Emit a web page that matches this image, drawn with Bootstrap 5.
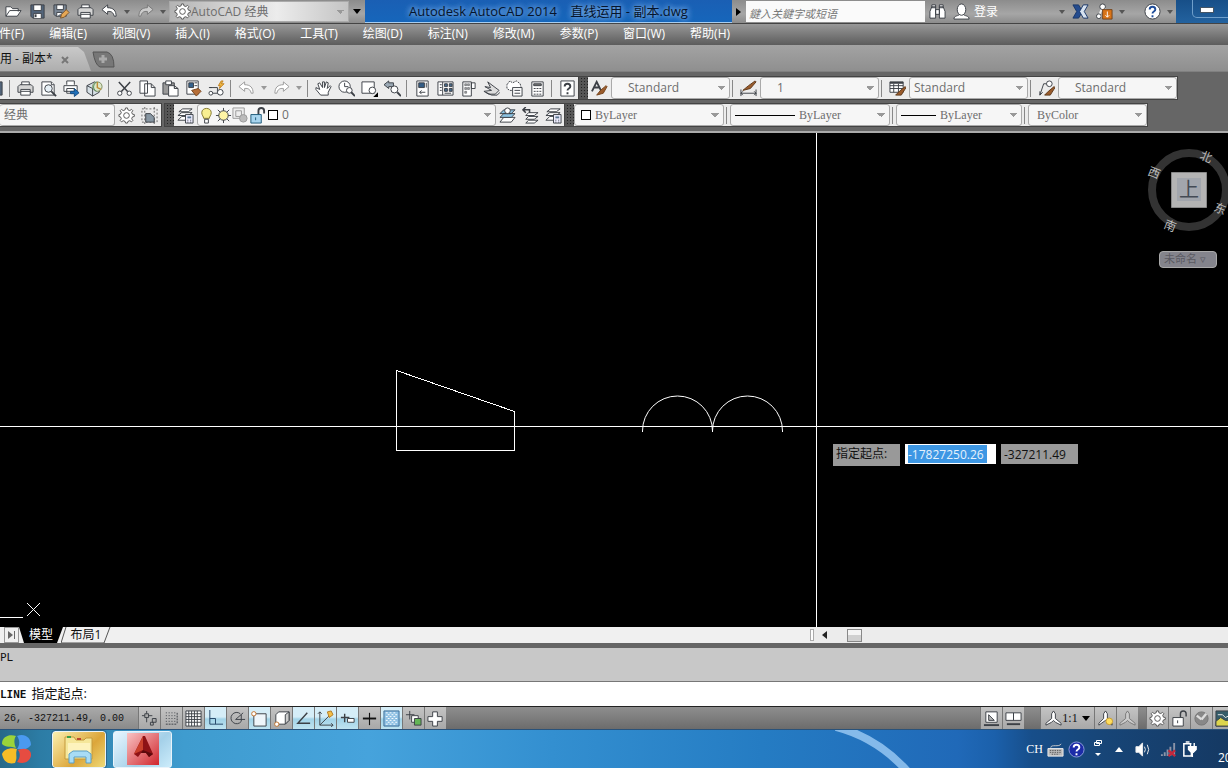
<!DOCTYPE html>
<html lang="zh-CN">
<head>
<meta charset="utf-8">
<meta name="viewport" content="width=device-width, initial-scale=1">
<title>Autodesk AutoCAD 2014</title>
<link rel="stylesheet" href="https://cdn.jsdelivr.net/npm/bootstrap@5.3.0/dist/css/bootstrap.min.css">
<style>
:root{--ui:"Open Sans","Noto Sans CJK SC",sans-serif;--song:"Liberation Serif","Noto Sans CJK SC",serif}
body{font:12px/16px var(--ui);background:#666;color:#111}
button,select,input{font:inherit;color:inherit;border:0;padding:0;background:none;border-radius:0}
button,.ic{flex:none}
.ic{width:17px;height:17px;fill:#fff;stroke:#3c4046;stroke-width:1;display:block}
.ic.muted-line{stroke:#999}
.ic.muted{fill:#ccc;stroke:#777}
.app-title{height:24px;background:linear-gradient(#8c8c8c,#a6a6a6 60%,#8c8c8c);border-bottom:1px solid #444;padding-left:1px}
.qb{width:24px;height:23px;display:flex;align-items:center;justify-content:center}
.qb.fold{width:14px}
.dd{width:12px;height:22px;display:flex;align-items:center;justify-content:center}
.dd::before{content:"";border:3px solid transparent;border-top:4px solid #555;border-bottom:0}
.dd.more{width:16px}
.dd.more::before{border-width:4px;border-top:5px solid #000;border-bottom:0}
.dim::before{border-top-color:#999}
.combo{display:flex;align-items:center;height:22px;min-width:0;background:#f6f6f6;border:1px solid #aaa;border-radius:3px;color:#6d6d6d}
.combo select{appearance:none;flex:1;min-width:0;height:18px;line-height:18px;padding:0 14px 0 4px;outline:0;background:linear-gradient(45deg,transparent 50%,#999 50%) no-repeat right 7px center/4px 4px,linear-gradient(-45deg,transparent 50%,#999 50%) no-repeat right 3px center/4px 4px}
.combo select{background:conic-gradient(from -45deg at 50% 100%,#999 90deg,transparent 0) no-repeat right 4px center/8px 4px}
.combo .sw{width:10px;height:10px;border:1px solid #000;background:#fff;flex:none;margin-left:2px}
.combo hr{margin:0;border-top:1px solid #000;opacity:1;flex:none}
.l-type{width:60px}.l-weight{width:35px}
.song{font-family:var(--song)}
.combo.w-space{width:180px;height:21px;border-radius:0;background:linear-gradient(90deg,#b4b4b4,#ececec 60%,#c4c4c4)}
.caption{background:linear-gradient(#1a5fb4,#1666bb);border-bottom:1px solid #a9cdef;font-size:13px;color:#05142c;text-shadow:0 0 6px #8fbcf0,0 0 6px #8fbcf0;white-space:pre}
.find{width:179px;height:21px;background:#fafafa;font-style:italic;font-size:11px;color:#666;padding:3px 3px 0}
.find::placeholder{color:#777}
.info{width:251px;flex:none}
.winbtns{width:52px;background:linear-gradient(#174f88,#23629f);padding-left:16px;flex:none}
.winbtns button{width:50px;height:18px;border:1px solid #6f9fcb;border-top:0;border-radius:0 0 5px 5px;display:flex}
.winbtns i{width:12px;height:4px;background:#fff;outline:1px solid #456;margin:8px}
.app-menu{height:21px;background:linear-gradient(#989898,#5c5c5c);gap:25px;margin:0;padding:2px 0 0;overflow:hidden;white-space:nowrap}
.app-menu a{color:#fff;text-decoration:none;flex:none}
.app-menu a:first-child{margin-left:-13px}
.docs{height:27px;background:linear-gradient(#a3a3a3,#8f8f8f);border-bottom:1px solid #808080}
.doc{height:24px;width:92px;background:linear-gradient(#c9c9c9,#aeaeae);clip-path:polygon(0 0,78px 0,84px 5px,91px 24px,0 24px);margin-top:2px}
.rowbar{height:22px;margin-top:5px}
.strip{display:flex;align-items:center;height:22px;background:#ececec;outline:1px solid #444;flex:none}
.strip.lead-cut{margin-left:-16px}
.tb{width:23px;height:22px;display:flex;align-items:center;justify-content:center}
.sp{width:4px;height:17px;border-left:1px solid #888;margin-left:2px;flex:none}
.roomy .sp{width:5px}
.grip{width:9px;height:22px;flex:none;background:radial-gradient(#222 1px,transparent 1px) 1px 0/3px 3px,#555}
.w-cut{width:115px}.w-std{width:119px}.w-lay{width:299px}.w-col{width:150px}.w-lt{width:160px}.w-lw{width:126px}
.model{background:#000;min-height:300px;border-top:2px solid #aaa;margin-top:5px;position:relative;overflow:hidden}
.model>svg{position:absolute}
.drawing{inset:0;width:100%;height:100%;fill:none;stroke:#fff;stroke-width:1;shape-rendering:crispEdges}
.drawing .arc{shape-rendering:auto}
.cube{right:0;top:10px;width:84px;height:96px}
.ucs{left:0;bottom:0;width:50px;height:40px;stroke:#fff;shape-rendering:crispEdges}
.ucsname{position:absolute;right:11px;top:118px;width:58px;height:17px;border-radius:4px;border:1px solid #aaa;background:#84848c;color:#5a5a62;font:11px/13px var(--song);text-align:left;padding:0 4px}
.dyn{position:absolute;left:833px;top:311px;gap:5px;height:22px}
.dyn label,.dyn .ybox{background:#999;height:22px;padding:2px 3px;width:67px}
.dyn .xbox{background:#fff;width:91px;height:20px;padding:1px 3px}
.dyn .xbox input{background:#3d97e4;color:#e6f2fc;width:79px;height:18px;display:block}
.dyn .ybox{width:77px;height:20px}
.tabsbar{height:16px;background:#f0f0f0}
.tabsbar button{height:16px;line-height:16px}
.last{width:15px;border:1px solid #999;margin-left:4px}
.tabsbar .last{border:1px solid #999}
.tmodel{width:44px;background:#000;color:#fff;clip-path:polygon(0 0,100% 0,38px 100%,5px 100%)}
.tlay{width:50px;margin-left:-2px;position:relative}
.tlay svg{position:absolute;inset:0;width:50px;height:16px;stroke:#555;fill:none}
.hscroll{width:34%;background:#ececec}
.split{width:4px;height:12px;border:1px solid #aaa;background:#fff}
.thumb{width:15px;height:13px;border:1px solid #888;background:linear-gradient(#f4f4f4 50%,#d0d0d0 50%);margin-left:20px}
.hist{height:39px;background:#c8c8c8;border-top:5px solid #666;border-bottom:1px solid #777;font:11px/20px "DejaVu Sans Mono","Noto Sans CJK SC",monospace}
.cmd{height:24px;background:#fff;font-size:13px}
.cmd b{font:bold 11px/16px "DejaVu Sans Mono",monospace;margin-right:5px}
.cmd input{flex:1;outline:0}
.status{height:23px;border-top:1px solid #222;background:linear-gradient(#8e8e8e,#6c6c6c)}
.coords{width:138px;background:linear-gradient(#aaa,#8a8a8a);font:10px/24px "Liberation Mono",monospace;padding-left:4px;white-space:pre;flex:none}
.sb{height:22px;width:22px;background:linear-gradient(#c4c4c4,#a8a8a8);border-left:1px solid #777;display:flex;align-items:center;justify-content:center}
.sb.on{background:linear-gradient(#d5edf7 45%,#a2d3e8 55%,#bfe3f0)}
.sb.tail{margin-right:-6px}
.scale{width:54px;font:12px/20px var(--song)}
.task{height:39px;border-top:1px solid #29527a;background:linear-gradient(90deg,#276989 0,#2c7ca5 40px,#3f9ccf 15%,#46a3dc 30%,#338fd0 45%,#257cc3 62%,#2069b8 78%,#1b60ab 81%,#174e8a 84%,#174577 90%,#153963);overflow:hidden;position:relative}
.task .swoosh{position:absolute;left:64%;top:0;width:150px;height:39px}
.app{height:37px;border-radius:3px;display:flex;align-items:center;justify-content:center}
.task .app{border:1px solid #e9f3fa}
.files{width:54px;background:linear-gradient(135deg,#fbf0b0,#dca63a 60%,#eeda78);outline:1px solid #2b668d;margin-left:18px}
.acad{width:59px;background:linear-gradient(135deg,#e8f6ff,#a4d0e8 60%,#ccecfb);margin-left:7px}
.tray{color:#fff;position:relative}
.clock{width:10px;margin-top:18px;font-family:var(--ui)}
</style>
</head>
<body class="min-vh-100 d-flex flex-column overflow-hidden">
<svg width="0" height="0" class="position-absolute" aria-hidden="true">
<defs>
<symbol id="open" viewBox="0 0 18 18"><path d="M1 14V4h5l2 2h6v3M1 14l4-6h12l-4 6z"/></symbol>
<symbol id="save" viewBox="0 0 18 18"><path fill="#53657b" d="M2 2h14v14H4l-2-2z"/><path d="M5 2h8v6H5zM5 16v-5h8v5"/><path d="M7 12v3" stroke-width="2"/></symbol>
<symbol id="saveas" viewBox="0 0 18 18"><path fill="#7c8896" d="M1 2h13v12H3l-2-2z"/><path d="M4 2h7v5H4zM4 14v-4h6"/><path fill="#e6a755" stroke="#7b542b" d="M8 16l1-4 5-5 3 3-5 5z"/></symbol>
<symbol id="print" viewBox="0 0 18 18"><path d="M5 6V2h8v4"/><path fill="#d5d5d5" d="M1 7l2-2h12l2 2v6H1z"/><path d="M4 10h10v6H4zM4 12h10"/></symbol>
<symbol id="undo" viewBox="0 0 18 18"><path d="M7 2L1 7l6 5V9c4-.5 6 1 7 5h2c0-6-3-9-9-9z"/></symbol>
<symbol id="redo" viewBox="0 0 18 18"><path d="M11 2l6 5-6 5V9c-4-.5-6 1-7 5H2c0-6 3-9 9-9z"/></symbol>
<symbol id="gear" viewBox="0 0 18 18"><path stroke="#555" d="M8 1h2l.5 2 2 .8L14.300 2.500l1.400 1.400L14.500 5.600l.8 2 2 .4v2l-2 .5-.8 2 1.200 1.800-1.400 1.400-1.800-1.200-2 .8L10 17H8l-.5-1.700-2-.8-1.800 1.200-1.400-1.400 1.200-1.800-.8-2L1 10V8l1.700-.4.8-2L2.300 3.900l1.400-1.400 1.800 1.300 2-.8z"/><circle cx="9" cy="9" r="3" stroke="#555"/></symbol>
<symbol id="preview" viewBox="0 0 18 18"><path d="M2 2h10l3 3v11H2z"/><path d="M12 2v3h3"/><circle cx="9" cy="9" r="4" fill="#e7f0f6"/><path stroke-width="2" d="M12 12l5 5"/></symbol>
<symbol id="publish" viewBox="0 0 18 18"><path d="M4 5V1h8v4M1 6h14v6H1zM4 9h8v5H4z"/><path fill="#1f6fb8" stroke="#164d83" d="M8 12h4v-3l5 4.500-5 4v-3H8z"/></symbol>
<symbol id="globe" viewBox="0 0 18 18"><path fill="#d6e0e6" d="M1 6l8-4 5 3v8l-7 4-6-4z"/><path fill="none" d="M1 6l6 3v8M7 9l3-2"/><circle cx="12" cy="7" r="5" fill="#dce7c9" stroke="#7a8a5a"/><path d="M12 2v6l4 2" stroke="#bf8d36" fill="none" stroke-width="1.500"/><path d="M11 2c-4 4-4 7 0 10" stroke="#4b8c65" fill="none"/></symbol>
<symbol id="cut" viewBox="0 0 18 18"><path fill="none" stroke-width="1.600" d="M3 2l10 11M15 2L5 13"/><circle cx="4" cy="14" r="2.300"/><circle cx="14" cy="14" r="2.300"/></symbol>
<symbol id="copy" viewBox="0 0 18 18"><path d="M1 1h8v13H1zM6 4h7l4 4v9H6zM13 4v4h4"/></symbol>
<symbol id="paste" viewBox="0 0 18 18"><path fill="#999" d="M1 3h12v12H1z"/><path d="M4 1h6v4H4zM7 6h6l4 3v8H7zM13 6v3h4"/></symbol>
<symbol id="match" viewBox="0 0 18 18"><path d="M2 1h12v14H2z"/><path fill="#35628d" d="M4 3h5v5H4zM10 3h3M10 6h3"/><path fill="#b66e37" stroke="#75431b" d="M7 11l7-2 3 3-5 5z"/></symbol>
<symbol id="block" viewBox="0 0 18 18"><path fill="none" d="M2 8h8v6M4 14h8M1 8h3"/><circle cx="3" cy="14" r="2"/><circle cx="13" cy="13" r="3"/><path fill="#f4bd46" stroke="#bf801f" d="M14 1l-3 5h2l-1 3 5-5h-3l2-3z"/></symbol>
<symbol id="hand" viewBox="0 0 18 18"><path d="M6 16L1 10V8l4 2-2-6 2-1 3 5V2h2v6l2-6 2 1-1 6 3-3 1 1-3 6v3z"/></symbol>
<symbol id="zoomrt" viewBox="0 0 18 18"><circle cx="7" cy="7" r="6"/><path fill="none" d="M7 3v4h4"/><circle cx="12" cy="11" r="3"/><path stroke-width="2" d="M14 13l4 4"/></symbol>
<symbol id="zoomwin" viewBox="0 0 18 18"><path d="M1 2h13v12H1z"/><circle cx="12" cy="11" r="3.500"/><path fill="#000" stroke="none" d="M18 13v5h-5z"/></symbol>
<symbol id="zoomprev" viewBox="0 0 18 18"><path fill="#9aa8b4" d="M0 5l5-4v2h5v4H5v2z"/><circle cx="11" cy="10" r="3.700"/><path stroke-width="2" d="M14 13l4 4"/></symbol>
<symbol id="props" viewBox="0 0 18 18"><path d="M3 1h12v16H3z"/><path fill="#345d86" d="M5 3h6v5H5z"/><path d="M13 3v5M6 13h6M8 11l-2 2 2 2"/></symbol>
<symbol id="dc" viewBox="0 0 18 18"><path d="M1 2h16v14H1z"/><path fill="#466a8c" d="M8 4h3v3H8zM13 4h3v3h-3zM8 9h3v3H8zM13 9h3v3h-3z"/><path d="M6 2v14M3 5h2M3 8h2M3 11h2M8 14h7"/></symbol>
<symbol id="palette" viewBox="0 0 18 18"><path d="M3 2h9v15H3zM12 3h4v6h-4z"/><path fill="#aaa" stroke-width=".5" d="M5 4h2v2H5zM8 4h2v2H8zM5 8h2v2H5zM8 8h2v2H8zM5 12h2v2H5z"/></symbol>
<symbol id="sheet" viewBox="0 0 18 18"><path fill="#ddd" d="M5 2l12 9-4 4H6l-5-3 8-1-7-4 6 1z"/><path fill="none" d="M3 13l6 3h6l3-3"/></symbol>
<symbol id="markup" viewBox="0 0 18 18"><path stroke-dasharray="2 1" d="M1 5l3-4 3 2 4-2 4 3 1 4-4 3H4L1 9z"/><path d="M7 8h10v9H7zM9 11h6M9 14h6"/></symbol>
<symbol id="calc" viewBox="0 0 18 18"><path d="M3 2h12v15H3z"/><path fill="#777" d="M5 4h8v2H5z"/><path d="M5 9h2M8 9h2M11 9h2M5 12h2M8 12h2M11 12h2M5 15h2M8 15h2M11 15h2"/></symbol>
<symbol id="help" viewBox="0 0 18 18"><path d="M2 1h14v16H2z"/><path fill="none" stroke-width="2" d="M6 7c0-4 6-4 6 0 0 2-3 2-3 4M9 13v2"/></symbol>
<symbol id="tstyle" viewBox="0 0 18 18"><path stroke-width="2" fill="none" d="M1 12L6 2l5 10M3 8h6"/><path fill="#9b5c2c" stroke="#75431b" d="M6 16l4-5 6-5 1 1-4 7z"/></symbol>
<symbol id="dstyle" viewBox="0 0 18 18"><path fill="none" d="M1 10v7M17 10v7M1 14h16M3 12l-2 2 2 2M15 12l2 2-2 2"/><path fill="#9b5c2c" stroke="#5d391c" d="M3 11l6-5 7-5 1 1-6 7z"/></symbol>
<symbol id="tbstyle" viewBox="0 0 18 18"><path d="M1 2h14v11H1zM1 6h14M1 9h14M5 4v9M10 4v9"/><path stroke-width="2" d="M1 3h14"/><path fill="#9b5c2c" stroke="#5d391c" d="M7 16l4-4 6-5 1 1-5 8z"/></symbol>
<symbol id="mlstyle" viewBox="0 0 18 18"><path fill="none" d="M2 16L6 4h4M2 16v-4M2 16l3-3"/><circle cx="12" cy="4" r="3"/><path fill="#9b5c2c" stroke="#5d391c" d="M7 16l4-4 6-5 1 1-5 8z"/></symbol>
<symbol id="wsave" viewBox="0 0 18 18"><path fill="none" stroke-dasharray="2 2" stroke="#666" d="M1 2h16v14H1zM4 0v18M14 0v18"/><path fill="#8796a2" d="M5 7h5l4 4v5H5z"/></symbol>
<symbol id="layermgr" viewBox="0 0 18 18"><path d="M6 2h10l-4 3H2zM5 6h11l-4 3H1zM5 10h10l-4 4H1z"/><path fill="#eef" d="M9 8h8v9H9z"/><path fill="#5b7690" stroke="none" d="M11 10h4v2h-4z"/><path d="M11 14h1M14 14h1M11 16h1M14 16h1"/></symbol>
<symbol id="layerblue" viewBox="0 0 18 18"><path d="M5 11h12l-4 5H1z"/><path fill="#8cc3e2" d="M5 7h12l-4 4H1zM5 3h12l-4 4H1z"/><circle cx="9" cy="4" r="3"/></symbol>
<symbol id="layerprev" viewBox="0 0 18 18"><path d="M7 6h10l-4 3H4zM7 10h10l-4 3H4zM7 14h10l-4 3H4z"/><path fill="none" stroke-width="1.600" d="M1 3h7v3M4 0L1 3l3 3"/></symbol>
<symbol id="bulb" viewBox="0 0 18 18"><path fill="#f8ef92" stroke="#817529" d="M6 12c0-2-2-3-2-6 0-6 10-6 10 0 0 3-2 4-2 6z"/><path d="M7 13h4v4H7z"/></symbol>
<symbol id="sun" viewBox="0 0 18 18"><path fill="none" d="M9 1v16M1 9h16M3 3l12 12M15 3L3 15"/><circle cx="9" cy="9" r="5" fill="#fff5a5"/></symbol>
<symbol id="vpf" viewBox="0 0 18 18"><g stroke="#999" fill="#eee"><path d="M1 1h12v11H1zM4 4h6v6H4z"/><circle cx="12" cy="12" r="4" fill="#bbb"/></g></symbol>
<symbol id="lock" viewBox="0 0 18 18"><path fill="none" stroke-width="2" d="M10 8V4c0-4 6-4 6 0v3"/><path fill="#a8d5ef" stroke="#1c5878" d="M2 8h11v9H2zM7 11v3"/></symbol>
<symbol id="unlock" viewBox="0 0 18 18"><path fill="none" stroke-width="1.500" d="M10 8V4c0-4 6-4 6 0v3"/><path d="M2 8h11v9H2zM7 11v3"/></symbol>
<symbol id="bino" viewBox="0 0 18 18"><path d="M3 4h4v12H1V9zM11 4h4l2 5v7h-6zM7 7h4v5H7zM3 2h4v3H3zM11 2h4v3h-4z"/></symbol>
<symbol id="user" viewBox="0 0 18 18"><path d="M1 17c0-4 5-3 6-5h4c1 2 6 1 6 5z"/><ellipse cx="9" cy="7" rx="4.500" ry="6"/></symbol>
<symbol id="xch" viewBox="0 0 18 18"><path fill="#254c8e" stroke="#1a3768" d="M1 2h6l4 7-4 7H1l4-7z"/><path fill="#d7e2f0" stroke="#1a3768" d="M17 2h-5L8 9l4 7h5l-4-7z"/></symbol>
<symbol id="a360" viewBox="0 0 18 18"><path fill="none" stroke="#eee" stroke-width="2" d="M3 14L7 4l7 7M3 14h6"/><circle cx="7" cy="4" r="3"/><circle cx="3" cy="14" r="2.500"/><path fill="#d97418" stroke="#75431b" d="M7 7h10v10H7z"/><path stroke="#fff" d="M12 9v6M10 13l2 2 2-2" fill="none"/></symbol>
<symbol id="qmark" viewBox="0 0 18 18"><circle cx="9" cy="9" r="8"/><path fill="none" stroke="#1f4d9a" stroke-width="2" d="M6 7c0-4 6-4 6 0 0 2-3 2-3 4M9 13v2"/></symbol>
<symbol id="infer" viewBox="0 0 18 18"><path fill="none" d="M1 6h11M6 1v12"/><path fill="#aaa" d="M4 4h4v4H4zM12 9h4v4h-4zM10 13h3v3h-3z"/></symbol>
<symbol id="snap" viewBox="0 0 18 18"><path fill="none" stroke-dasharray="1 2" d="M3 3h10M3 6h10M3 9h10M3 12h10"/><path d="M3 15h12M15 3v12" stroke-dasharray="2 1"/></symbol>
<symbol id="grid" viewBox="0 0 18 18"><path d="M1 1h16v16H1z"/><path d="M4 1v16M7 1v16M10 1v16M13 1v16M1 4h16M1 7h16M1 10h16M1 13h16"/></symbol>
<symbol id="ortho" viewBox="0 0 18 18"><path fill="none" stroke="#246" d="M3 0v15h14M3 9h6v6"/></symbol>
<symbol id="polar" viewBox="0 0 18 18"><path fill="none" d="M12 4a6 6 0 1 0 1 8M7 10l8-7M7 10h10M13 5v7"/></symbol>
<symbol id="osnap" viewBox="0 0 18 18"><path fill="#eef5fa" d="M3 4h13v13H3z"/><circle cx="3" cy="4" r="2.300" stroke="#c0702a"/></symbol>
<symbol id="osnap3" viewBox="0 0 18 18"><path d="M3 5l3-3h11v9l-4 4H3z"/><path fill="#ccc" d="M13 5l4-3v9l-4 4z"/><circle cx="4" cy="15" r="2.300" stroke="#c0702a"/></symbol>
<symbol id="otrack" viewBox="0 0 18 18"><path fill="none" stroke-width="1.500" d="M13 3L3 14h13"/></symbol>
<symbol id="ducs" viewBox="0 0 18 18"><path fill="none" d="M3 16V2L1 4m2-2l2 2M3 16h14l-2-2m2 2l-2 2M3 16L13 6"/><path fill="#f4bd46" stroke="#b37a20" d="M11 2l4-1 2 4-4 3z"/></symbol>
<symbol id="dyn" viewBox="0 0 18 18"><path fill="none" stroke-width="1.500" d="M2 8h9M6 4v9"/><path d="M9 9h7v4H9z"/></symbol>
<symbol id="lwt" viewBox="0 0 18 18"><path stroke="#111" d="M9 3v13" stroke-width="1.200"/><path stroke="#111" stroke-width="2" d="M2 9h14"/></symbol>
<symbol id="tpy" viewBox="0 0 18 18"><path fill="#8fc1e4" stroke="#3a6b97" d="M1 1h16v16H1z"/><path stroke="#fff" stroke-dasharray="2 2" d="M3 3h12M5 5h12M3 7h12M5 9h12M3 11h12M5 13h12M3 15h12"/></symbol>
<symbol id="qp" viewBox="0 0 18 18"><path fill="none" d="M1 5h9M5 1v9"/><path d="M7 6h7v7H7z"/><path fill="#64b556" d="M10 9h7v7h-7z"/></symbol>
<symbol id="plus" viewBox="0 0 18 18"><path d="M6 2h5v5h5v5h-5v5H6v-5H1V7h5z"/></symbol>
<symbol id="msp" viewBox="0 0 18 18"><path d="M3 2h12v11H3zM6 5v6h6z"/><path stroke-width="2" d="M1 16h16"/></symbol>
<symbol id="lay2" viewBox="0 0 18 18"><path d="M1 3h8v8H1zM9 3h8v8H9z"/><path stroke-width="2" d="M2 15h14"/></symbol>
<symbol id="anno" viewBox="0 0 18 18"><path d="M9 1l2 3v5l6 5v2l-6-3-2-2-2 2-6 3v-2l6-5V4z"/></symbol>
<symbol id="annosun" viewBox="0 0 18 18"><path d="M9 1l2 3v5l5 5v2l-7-5-7 5v-2l5-5V4z"/><circle cx="13" cy="12" r="3.500" fill="#ffde5e" stroke="#c59a30"/></symbol>
<symbol id="iso" viewBox="0 0 18 18"><circle cx="9" cy="9" r="7" fill="#888" stroke="#777"/><path stroke="#ddd" stroke-width="2.500" d="M9 10l5-6M4 6l5 4"/></symbol>
<symbol id="hw" viewBox="0 0 18 18"><path fill="#345c69" d="M1 1h17v16H1z"/><path fill="#ddd54d" d="M1 12l5-4 5 3h7v6H1z"/><path stroke="#eee" d="M3 5h5l3 3 6-3" fill="none"/></symbol>
<symbol id="kbd" viewBox="0 0 18 18"><path fill="#bbb" stroke="#eee" d="M1 8h16v8H1z"/><path stroke="#555" stroke-dasharray="1.500 1" d="M3 10h12M3 12h12M5 14h8"/><path stroke="#ccc" fill="none" d="M4 7c0-4 9 0 11-4"/></symbol>
<symbol id="thelp" viewBox="0 0 18 18"><circle cx="9" cy="9" r="8" fill="#1c2ca8" stroke="#8d9cdb"/><path fill="none" stroke="#fff" stroke-width="2" d="M6 7c0-4 6-4 6 0 0 2-3 2-3 4M9 13v2"/></symbol>
<symbol id="vol" viewBox="0 0 18 18"><path stroke="#eee" d="M1 6h3l4-4v14l-4-4H1z"/><path stroke="#eee" fill="none" d="M10 6q2 3 0 6M13 4q3 5 0 10"/></symbol>
<symbol id="net" viewBox="0 0 18 18"><path stroke="#8c95a8" stroke-width="2" d="M2 16v-2M5 16v-4M8 16v-7M11 16V6M15 16V2"/><path stroke="#c4283c" stroke-width="2.500" d="M9 10l7 6M16 10l-7 6"/></symbol>
<symbol id="power" viewBox="0 0 18 18"><path stroke="#fff" stroke-width="1.600" fill="none" d="M11 3H3v13h8v-4M5 1h4"/><path stroke="#fff" d="M8 6h8v3l-3 3h-2L8 9zM10 6V2M14 6V2M12 12v5" stroke-width="1.500"/></symbol>
</defs></svg>

<header class="app-title d-flex align-items-center">
  <button class="qb" aria-label="打开"><svg class="ic"><use href="#open"/></svg></button>
  <button class="qb" aria-label="保存"><svg class="ic"><use href="#save"/></svg></button>
  <button class="qb" aria-label="另存为"><svg class="ic"><use href="#saveas"/></svg></button>
  <button class="qb" aria-label="打印"><svg class="ic"><use href="#print"/></svg></button>
  <button class="qb" aria-label="放弃"><svg class="ic"><use href="#undo"/></svg></button>
  <button class="dd" aria-label="放弃列表"></button>
  <button class="qb" aria-label="重做"><svg class="ic muted"><use href="#redo"/></svg></button>
  <button class="dd" aria-label="重做列表"></button>
  <div class="combo w-space flex-shrink-0"><svg class="ic ms-1"><use href="#gear"/></svg><select aria-label="工作空间" class="ps-0"><option>AutoCAD 经典</option></select></div>
  <button class="dd more" aria-label="自定义快速访问"></button>
  <div class="caption flex-fill h-100 d-flex align-items-center justify-content-center">Autodesk AutoCAD 2014    直线运用 - 副本.dwg</div>
  <button class="qb fold" aria-label="展开搜索"><svg width="6" height="8"><path d="M0 0l5 4-5 4z" fill="#000"/></svg></button>
  <input class="find" placeholder="鍵入关鍵字或短语" aria-label="搜索">
  <div class="info d-flex align-items-center">
    <button class="qb" aria-label="查找"><svg class="ic"><use href="#bino"/></svg></button>
    <button class="d-flex align-items-center gap-1 text-white ps-1"><svg class="ic"><use href="#user"/></svg>登录</button>
    <button class="dd ms-auto" aria-label="登录选项"></button>
    <button class="qb" aria-label="Exchange"><svg class="ic"><use href="#xch"/></svg></button>
    <button class="qb" aria-label="Autodesk 360"><svg class="ic"><use href="#a360"/></svg></button>
    <button class="dd me-2" aria-label="360 选项"></button>
    <button class="qb ms-1" aria-label="帮助"><svg class="ic"><use href="#qmark"/></svg></button>
    <button class="dd" aria-label="帮助选项"></button>
  </div>
  <div class="winbtns h-100"><button aria-label="最小化"><i></i></button></div>
</header>

<nav class="app-menu d-flex">
  <a href="#">文件(F)</a><a href="#">编辑(E)</a><a href="#">视图(V)</a><a href="#">插入(I)</a><a href="#">格式(O)</a><a href="#">工具(T)</a><a href="#">绘图(D)</a><a href="#">标注(N)</a><a href="#">修改(M)</a><a href="#">参数(P)</a><a href="#">窗口(W)</a><a href="#">帮助(H)</a>
</nav>

<div class="docs d-flex align-items-center">
  <div class="doc d-flex align-items-center flex-shrink-0">用 - 副本*<button class="ms-2" aria-label="关闭"><svg width="8" height="8" stroke="#777" stroke-width="2"><path d="M1 1l6 6M7 1L1 7"/></svg></button></div>
  <button aria-label="新建"><svg width="24" height="18" class="d-block mt-1"><path d="M1 1h14q7 2 7 15H8Q3 14 1 1z" fill="#777" stroke="#555"/><path d="M7 8h8M11 4v8" stroke="#aaa" stroke-width="3"/></svg></button>
</div>

<div class="rowbar roomy d-flex">
  <div class="strip lead-cut">
    <button class="tb" aria-label="保存"><svg class="ic"><use href="#save"/></svg></button><i class="sp"></i>
    <button class="tb" aria-label="打印"><svg class="ic"><use href="#print"/></svg></button><button class="tb" aria-label="打印预览"><svg class="ic"><use href="#preview"/></svg></button><button class="tb" aria-label="发布"><svg class="ic"><use href="#publish"/></svg></button><button class="tb" aria-label="三维打印"><svg class="ic"><use href="#globe"/></svg></button><i class="sp"></i>
    <button class="tb" aria-label="剪切"><svg class="ic"><use href="#cut"/></svg></button><button class="tb" aria-label="复制"><svg class="ic"><use href="#copy"/></svg></button><button class="tb" aria-label="粘贴"><svg class="ic"><use href="#paste"/></svg></button><button class="tb" aria-label="特性匹配"><svg class="ic"><use href="#match"/></svg></button><button class="tb" aria-label="块编辑器"><svg class="ic"><use href="#block"/></svg></button><i class="sp"></i>
    <button class="tb" aria-label="放弃"><svg class="ic muted-line"><use href="#undo"/></svg></button><button class="dd dim" aria-label="放弃列表"></button><button class="tb" aria-label="重做"><svg class="ic muted-line"><use href="#redo"/></svg></button><button class="dd dim" aria-label="重做列表"></button><i class="sp"></i>
    <button class="tb" aria-label="平移"><svg class="ic"><use href="#hand"/></svg></button><button class="tb" aria-label="实时缩放"><svg class="ic"><use href="#zoomrt"/></svg></button><button class="tb" aria-label="窗口缩放"><svg class="ic"><use href="#zoomwin"/></svg></button><button class="tb" aria-label="缩放上一个"><svg class="ic"><use href="#zoomprev"/></svg></button><i class="sp"></i>
    <button class="tb" aria-label="特性"><svg class="ic"><use href="#props"/></svg></button><button class="tb" aria-label="设计中心"><svg class="ic"><use href="#dc"/></svg></button><button class="tb" aria-label="工具选项板"><svg class="ic"><use href="#palette"/></svg></button><button class="tb" aria-label="图纸集"><svg class="ic"><use href="#sheet"/></svg></button><button class="tb" aria-label="标记集"><svg class="ic"><use href="#markup"/></svg></button><button class="tb" aria-label="计算器"><svg class="ic"><use href="#calc"/></svg></button><i class="sp"></i>
    <button class="tb" aria-label="帮助"><svg class="ic"><use href="#help"/></svg></button>
  </div>
  <div class="strip"><i class="grip"></i>
    <button class="tb" aria-label="文字样式"><svg class="ic"><use href="#tstyle"/></svg></button><div class="combo w-std"><select class="ps-3" aria-label="文字样式"><option>Standard</option></select></div><i class="sp"></i>
    <button class="tb" aria-label="标注样式"><svg class="ic"><use href="#dstyle"/></svg></button><div class="combo w-std"><select class="ps-3" aria-label="标注样式"><option>1</option></select></div><i class="sp"></i>
    <button class="tb" aria-label="表格样式"><svg class="ic"><use href="#tbstyle"/></svg></button><div class="combo w-std"><select aria-label="表格样式"><option>Standard</option></select></div><i class="sp"></i>
    <button class="tb" aria-label="引线样式"><svg class="ic"><use href="#mlstyle"/></svg></button><div class="combo w-std"><select class="ps-3" aria-label="引线样式"><option>Standard</option></select></div>
  </div>
</div>

<div class="rowbar d-flex">
  <div class="strip">
    <div class="combo border-start-0 w-cut"><select class="ps-1" aria-label="工作空间"><option>经典</option></select></div>
    <button class="tb" aria-label="工作空间设置"><svg class="ic"><use href="#gear"/></svg></button><button class="tb" aria-label="我的工作空间"><svg class="ic"><use href="#wsave"/></svg></button>
  </div>
  <div class="strip ms-1"><i class="grip"></i>
    <button class="tb" aria-label="图层特性"><svg class="ic"><use href="#layermgr"/></svg></button>
    <div class="combo w-lay"><svg class="ic"><use href="#bulb"/></svg><svg class="ic"><use href="#sun"/></svg><svg class="ic"><use href="#vpf"/></svg><svg class="ic"><use href="#lock"/></svg><i class="sw"></i><select aria-label="图层"><option>0</option></select></div>
    <button class="tb" aria-label="置为当前"><svg class="ic"><use href="#layerblue"/></svg></button><button class="tb" aria-label="上一个图层"><svg class="ic"><use href="#layerprev"/></svg></button><button class="tb" aria-label="图层状态"><svg class="ic"><use href="#layermgr"/></svg></button>
  </div>
  <div class="strip song"><i class="grip"></i>
    <div class="combo w-col ps-1"><i class="sw"></i><select aria-label="颜色"><option>ByLayer</option></select></div><i class="sp"></i>
    <div class="combo w-lt ps-1"><hr class="l-type"><select aria-label="线型"><option>ByLayer</option></select></div><i class="sp"></i>
    <div class="combo w-lw ps-1"><hr class="l-weight"><select aria-label="线宽"><option>ByLayer</option></select></div><i class="sp"></i>
    <div class="combo w-std"><select class="ps-2" aria-label="打印样式"><option>ByColor</option></select></div>
  </div>
</div>

<main class="model flex-fill">
  <svg class="drawing"><path d="M0 293.500h4000M816.500 0v4000M396.500 237.500l118 41v39h-118z"/><path class="arc" d="M642.500 299v-1a35 35 0 0 1 70 0v1v-1a35 35 0 0 1 70 0v1"/></svg>
  <svg class="ucs"><path d="M0 30.500h23M27 16l13 13M40 16L27 29"/></svg>
  <svg class="cube" font-family="Noto Sans CJK SC, sans-serif" font-size="12" fill="#bbb" text-anchor="middle"><circle cx="45" cy="47" r="37" fill="none" stroke="#333" stroke-width="8"/><path fill="#b4b4b4" stroke="#888" d="M27.500 29.500h35v35h-35z"/><path fill="#a2a6ad" d="M33 35h24v23H33z"/><text x="45" y="54" font-size="20" fill="#444b55">上</text>
  <text x="62" y="18" transform="rotate(22 62 14)">北</text><text x="10" y="34" transform="rotate(22 10 30)">西</text><text x="26" y="87" transform="rotate(22 26 83)">南</text><text x="76" y="70" transform="rotate(22 76 66)">东</text></svg>
  <button class="ucsname">未命名 ▿</button>
  <form class="dyn d-flex">
    <label for="px">指定起点:</label>
    <div class="xbox"><input id="px" value="-17827250.26" aria-label="X"></div>
    <input class="ybox" value="-327211.49" aria-label="Y">
  </form>
</main>

<div class="tabsbar d-flex align-items-center">
  <button class="last" aria-label="最后一个布局"><svg width="9" height="8" class="d-block mx-auto"><path d="M1 0l5 4-5 4zM7 0h1v8H7z" fill="#666"/></svg></button>
  <button class="tmodel">模型</button>
  <button class="tlay"><svg><path d="M5 0L0 16M49 0l-6 16H0"/></svg>布局1</button>
  <div class="hscroll ms-auto h-100 d-flex align-items-center"><i class="split"></i><svg width="5" height="8" class="ms-2"><path d="M5 0v8L0 4z" fill="#222"/></svg><i class="thumb"></i></div>
</div>
<div class="hist">PL</div>
<div class="cmd d-flex align-items-center"><label for="cmdline"><b>LINE</b>指定起点:</label><input id="cmdline"></div>

<footer class="status d-flex">
  <div class="coords">26, -327211.49, 0.00</div>
  <button class="sb" aria-label="推断约束"><svg class="ic"><use href="#infer"/></svg></button><button class="sb" aria-label="捕捉"><svg class="ic"><use href="#snap"/></svg></button><button class="sb" aria-label="栅格"><svg class="ic"><use href="#grid"/></svg></button><button class="sb on" aria-label="正交"><svg class="ic"><use href="#ortho"/></svg></button><button class="sb" aria-label="极轴"><svg class="ic"><use href="#polar"/></svg></button><button class="sb on" aria-label="对象捕捉"><svg class="ic"><use href="#osnap"/></svg></button><button class="sb" aria-label="三维对象捕捉"><svg class="ic"><use href="#osnap3"/></svg></button><button class="sb on" aria-label="对象追踪"><svg class="ic"><use href="#otrack"/></svg></button><button class="sb on" aria-label="动态UCS"><svg class="ic"><use href="#ducs"/></svg></button><button class="sb on" aria-label="动态输入"><svg class="ic"><use href="#dyn"/></svg></button><button class="sb" aria-label="线宽"><svg class="ic"><use href="#lwt"/></svg></button><button class="sb on" aria-label="透明度"><svg class="ic"><use href="#tpy"/></svg></button><button class="sb" aria-label="快捷特性"><svg class="ic"><use href="#qp"/></svg></button><button class="sb" aria-label="选择循环"><svg class="ic"><use href="#plus"/></svg></button>
  <button class="sb ms-auto" aria-label="模型"><svg class="ic"><use href="#msp"/></svg></button><button class="sb" aria-label="快速查看布局"><svg class="ic"><use href="#lay2"/></svg></button>
  <button class="sb scale ms-3"><svg class="ic"><use href="#anno"/></svg>1:1<svg width="8" height="5" class="ms-1"><path d="M0 0h8L4 5z"/></svg></button><button class="sb" aria-label="注释可见性"><svg class="ic"><use href="#annosun"/></svg></button><button class="sb" aria-label="自动添加比例"><svg class="ic muted"><use href="#anno"/></svg></button>
  <button class="sb ms-2" aria-label="切换工作空间"><svg class="ic"><use href="#gear"/></svg></button><button class="sb" aria-label="锁定"><svg class="ic"><use href="#unlock"/></svg></button><button class="sb" aria-label="隔离对象"><svg class="ic"><use href="#iso"/></svg></button><button class="sb tail" aria-label="硬件加速"><svg class="ic"><use href="#hw"/></svg></button>
</footer>

<div class="task d-flex align-items-center">
  <svg class="swoosh"><path d="M50 -3Q92 8 122 42" fill="none" stroke="#9dccf5" stroke-width="8" opacity=".8"/></svg>
  <button aria-label="开始"><svg width="34" height="34" class="d-block"><path fill="#9bd43a" d="M2 12C2 4 10 2 16 4c-3 4-1 10 0 12-5-2-10 0-14-4z"/><path fill="#4a9af0" d="M17 4c8-3 14 2 14 9-5 6-9 4-14 4 3-4 3-9 0-13z"/><path fill="#f6bd27" d="M2 22c2-5 9-7 15-5-2 6 1 8-2 14-8 2-12-3-13-9z"/><path fill="#e64c41" d="M18 18c8-3 14 0 13 6-2 7-8 8-14 6 3-4 4-8 1-12z"/></svg></button>
  <button class="app files" aria-label="文件夹"><svg width="34" height="32"><path fill="#f5e79a" stroke="#c49a3d" d="M3 4h9l2 3h8l2-2h6v21H3z"/><path fill="#fdf3bd" d="M6 10h22v14H6z"/><path d="M5 3h4v2H5z" fill="#399d47"/><path d="M15 5h4v2h-4z" fill="#bc4632"/><path fill="#a8dcf5" stroke="#5a9ec4" d="M7 30v-9l4-3h14l4 3v9h-5v-6H12v6z"/></svg></button>
  <button class="app acad" aria-label="AutoCAD"><svg width="32" height="32"><defs><linearGradient id="rg" x2="1" y2="1"><stop stop-color="#f9c4c4"/><stop offset="1" stop-color="#d0262d"/></linearGradient></defs><path fill="url(#rg)" d="M0 0h32v32H0z"/><path fill="#8e1216" d="M16 3L7 21l4 3 3-4h5l3 4 4-3L18 3z"/><path fill="#c9402c" d="M16 3v14l-9 4z"/><path fill="#5d090c" d="M16 17l10 4-4 3-3-4h-5z"/></svg></button>
  <div class="tray ms-auto d-flex align-items-center gap-1 song">
    <span>CH</span><svg class="ic"><use href="#kbd"/></svg><svg class="ic"><use href="#thelp"/></svg>
    <svg width="10" height="20" fill="none" stroke="#fff" class="ms-1"><path d="M3.500 1.500h5v3h-5zM1.500 3.500h5v3h-5z"/><path fill="#fff" stroke="none" d="M2 14h6l-3 3z"/></svg>
    <svg width="8" height="5" class="ms-2"><path fill="#fff" d="M0 5h8L4 0z"/></svg>
    <svg class="ic ms-2"><use href="#vol"/></svg><svg class="ic ms-1"><use href="#net"/></svg><svg class="ic"><use href="#power"/></svg>
    <span class="clock ms-3">20</span>
  </div>
</div>
<script src="https://cdn.jsdelivr.net/npm/bootstrap@5.3.0/dist/js/bootstrap.bundle.min.js"></script>
</body>
</html>
